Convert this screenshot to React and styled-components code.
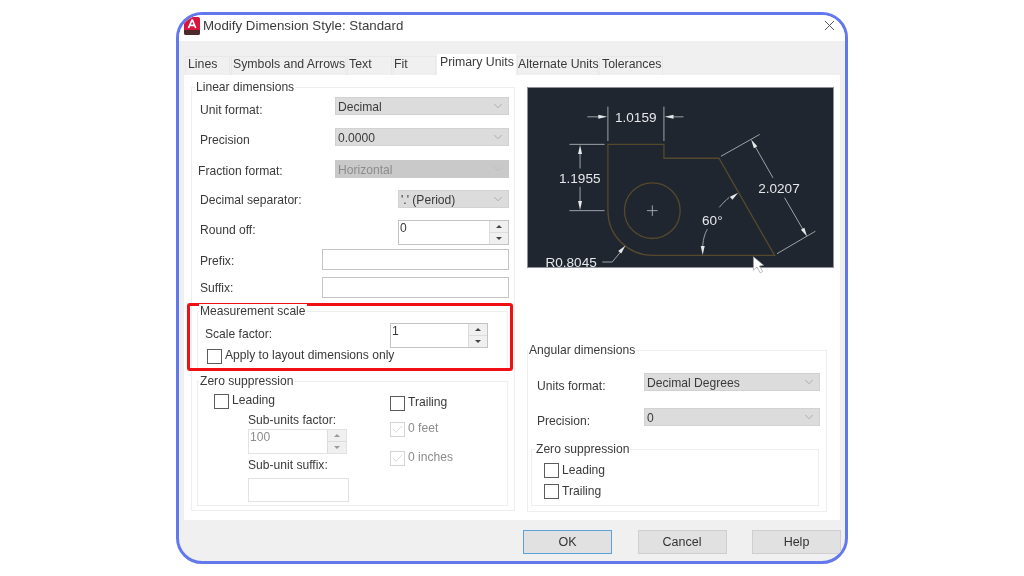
import React from 'react';
import styled, { createGlobalStyle } from 'styled-components';
import { Check, ChevronDown, X } from 'lucide-react';

const GlobalStyle = createGlobalStyle`
    html, body {
        margin: 0;
        padding: 0;
        background: #ffffff;
    }

    body {
        font-family: "Liberation Sans", Arial, sans-serif;
        font-size: 12.1px;
        line-height: 16px;
        color: #3a3a3a;
    }
`;

const Stage = styled.div`
    display: flex;
    justify-content: center;
    padding-top: 12px;
    height: 564px;
`;

const Dialog = styled.div`
    box-sizing: border-box;
    display: flex;
    flex-direction: column;
    width: 672px;
    height: 552px;
    border: 3px solid #6478ee;
    border-radius: 26px;
    background: #f0f0f0;
    overflow: hidden;
    filter: blur(0.35px);
`;

const TitleBar = styled.div`
    box-sizing: border-box;
    display: flex;
    align-items: center;
    height: 26px;
    padding: 0 7px 5px 5px;
    background: #ffffff;
`;

const TitleText = styled.span`
    margin-left: 3px;
    font-size: 13.3px;
    color: #3c3c3c;
`;

const CloseButton = styled.span`
    display: flex;
    margin-left: auto;
    color: #555555;
`;

const TabStrip = styled.div`
    display: flex;
    align-items: flex-end;
    height: 20px;
    margin: 14px 0 0 6px;
`;

const Tab = styled.div`
    box-sizing: border-box;
    flex: none;
    width: ${props => props.$width}px;
    height: ${props => (props.$active ? 21 : 19)}px;
    margin-right: 1px;
    padding-left: ${props => props.$pad}px;
    font-size: 12.3px;
    line-height: 14px;
    background: ${props => (props.$active ? '#ffffff' : '#f0f0f0')};
    border: 1px solid ${props => (props.$active ? '#ffffff' : '#e8e8e8')};
    border-bottom: none;
    white-space: nowrap;
`;

const TabPage = styled.div`
    box-sizing: border-box;
    display: flex;
    height: 445px;
    margin: 0 5px;
    padding: 5px 0 0 7px;
    background: #ffffff;
`;

const LeftColumn = styled.div`
    flex: none;
    width: 324px;
`;

const RightColumn = styled.div`
    flex: none;
    width: 307px;
    margin-left: 12px;
    padding-top: 7px;
`;

const Group = styled.fieldset`
    box-sizing: border-box;
    min-width: 0;
    width: ${props => (props.$width ? `${props.$width}px` : 'auto')};
    height: ${props => props.$height}px;
    margin: ${props => props.$margin || '0'};
    padding: ${props => props.$padding || '0'};
    border: 1px solid #eeeeee;
`;

const Legend = styled.legend`
    margin-left: ${props => props.$shift || 0}px;
    padding: 0 1px;
    line-height: 14px;
    color: #3a3a3a;
`;

const Row = styled.div`
    display: flex;
    justify-content: space-between;
    height: ${props => props.$height || 18}px;
    margin-top: ${props => props.$top || 0}px;
`;

const Label = styled.label`
    margin-top: ${props => props.$drop || 0}px;
    margin-left: ${props => props.$shift || 0}px;
    white-space: nowrap;
`;

const SelectBox = styled.div`
    box-sizing: border-box;
    display: flex;
    align-items: center;
    justify-content: space-between;
    width: ${props => props.$width}px;
    height: 18px;
    padding: 1px 3px 0 2px;
    background: ${props => (props.$disabled ? '#c9c9c9' : '#dcdcdc')};
    border: 1px solid ${props => (props.$disabled ? '#c9c9c9' : '#d2d2d2')};
    color: ${props => (props.$disabled ? '#8c8c8c' : '#3a3a3a')};
    white-space: nowrap;

    svg {
        margin-top: -1px;
        color: ${props => (props.$disabled ? '#b8b8b8' : '#9a9a9a')};
    }
`;

const TextInput = styled.div`
    box-sizing: border-box;
    width: ${props => props.$width}px;
    height: ${props => props.$height}px;
    margin-left: ${props => props.$left || 0}px;
    background: #ffffff;
    border: 1px solid ${props => (props.$disabled ? '#e2e2e2' : '#c4c4c4')};
`;

const SpinBox = styled.div`
    box-sizing: border-box;
    display: flex;
    width: ${props => props.$width}px;
    height: 25px;
    margin-left: ${props => props.$left || 0}px;
    background: #ffffff;
    border: 1px solid ${props => (props.$disabled ? '#e2e2e2' : '#c4c4c4')};
`;

const SpinValue = styled.span`
    flex: 1;
    padding-left: 1px;
    line-height: 15px;
    color: ${props => (props.$disabled ? '#8c8c8c' : '#3a3a3a')};
`;

const SpinButtons = styled.div`
    display: flex;
    flex-direction: column;
    flex: none;
    width: 18px;
    background: #f0f0f0;
    border-left: 1px solid #dcdcdc;
`;

const SpinStep = styled.span`
    display: flex;
    flex: 1;
    align-items: center;
    justify-content: center;

    & + & {
        border-top: 1px solid #dcdcdc;
    }

    &::after {
        content: '';
        border-left: 3px solid transparent;
        border-right: 3px solid transparent;
        border-${props => (props.$down ? 'top' : 'bottom')}: 3px solid ${props => (props.$disabled ? '#9a9a9a' : '#444444')};
    }
`;

const Highlight = styled.div`
    box-sizing: border-box;
    height: 68px;
    margin: 5px -4px 0 -13px;
    padding: 5px 0 0 7px;
    border: 3px solid #f00f14;
    border-radius: 3px;
`;

const ScaleGroup = styled.div`
    box-sizing: border-box;
    width: 311px;
    height: 57px;
    padding-left: 7px;
    border: 1px solid #eeeeee;
    border-bottom: none;
`;

const ScaleLegend = styled.span`
    display: block;
    width: fit-content;
    height: 14px;
    margin: -8px 0 1px -6px;
    padding: 0 1px;
    line-height: 14px;
    background: #ffffff;
`;

const ScaleRow = styled(Row)`
    margin-top: 5px;
    padding-right: 19px;
`;

const CheckRow = styled.div`
    display: flex;
    align-items: center;
    gap: 3px;
    height: 15px;
    margin-top: ${props => props.$top || 0}px;
    margin-left: ${props => props.$left || 0}px;
    color: ${props => (props.$disabled ? '#8c8c8c' : '#3a3a3a')};
    white-space: nowrap;
`;

const CheckText = styled.span`
    margin-bottom: ${props => props.$lift}px;
`;

const CheckBox = styled.span`
    box-sizing: border-box;
    display: flex;
    align-items: center;
    justify-content: center;
    flex: none;
    width: 15px;
    height: 15px;
    background: #ffffff;
    border: 1px solid ${props => (props.$disabled ? '#d4d4d4' : '#5c5c5c')};
    color: #c4c4c4;
`;

const ZeroColumns = styled.div`
    display: flex;
    padding-left: 16px;
`;

const ZeroLeft = styled.div`
    flex: none;
    width: 176px;
`;

const StackedLabel = styled.div`
    margin: ${props => props.$top || 0}px 0 ${props => props.$bottom || 0}px 34px;
`;

const Preview = styled.div`
    box-sizing: border-box;
    width: 307px;
    height: 181px;
    background: #1f262f;
    border: 1px solid #8f9296;

    svg {
        display: block;
        overflow: visible;
    }
`;

const AngularRow = styled(Row)`
    margin-right: -1px;
    padding-left: 6px;
`;

const Footer = styled.div`
    display: flex;
    justify-content: flex-end;
    gap: 25.5px;
    padding: 10px 4px 0 0;
`;

const DialogButton = styled.div`
    box-sizing: border-box;
    display: flex;
    align-items: center;
    justify-content: center;
    width: 89px;
    height: 24px;
    background: #e1e1e1;
    border: 1px solid ${props => (props.$primary ? '#5aa2d8' : '#cfcfcf')};
    font-size: 12.5px;
    color: #333333;
`;

const DrawingText = styled.text`
    font-family: "Liberation Sans", Arial, sans-serif;
    font-size: 41px;
    fill: #e6e8ea;
    text-anchor: middle;
`;

const AppIcon = () => (
    <svg width="16" height="18" viewBox="0 0 16 18">
        <rect width="16" height="18" rx="2" fill="#d8143f" />
        <path d="M0 13h16v3a2 2 0 0 1-2 2H2a2 2 0 0 1-2-2z" fill="#4a2a2a" />
        <path d="M4.5 11 8 3h.4l3.3 8M6 8.3h4.4" fill="none" stroke="#ffffff" strokeWidth="1.7" />
    </svg>
);

const Select = ({ width, disabled, children }) => (
    <SelectBox $width={width} $disabled={disabled}>
        <span>{children}</span>
        <ChevronDown size={14} strokeWidth={1.2} />
    </SelectBox>
);

const Spin = ({ width, left, disabled, children }) => (
    <SpinBox $width={width} $left={left} $disabled={disabled}>
        <SpinValue $disabled={disabled}>{children}</SpinValue>
        <SpinButtons>
            <SpinStep $disabled={disabled} />
            <SpinStep $down $disabled={disabled} />
        </SpinButtons>
    </SpinBox>
);

const Option = ({ top, left, lift = 4, disabled, checked, children }) => (
    <CheckRow $top={top} $left={left} $disabled={disabled}>
        <CheckBox $disabled={disabled}>
            {checked && <Check size={13} strokeWidth={1.2} />}
        </CheckBox>
        <CheckText $lift={lift}>{children}</CheckText>
    </CheckRow>
);

const Arrow = ({ x, y, angle }) => (
    <path d="M0 0 L-27 -6 L-27 6 Z" fill="#e6e8ea" transform={`translate(${x} ${y}) rotate(${angle})`} />
);

// coordinates are the reference crop at 3x, so the viewBox starts at 22,262
const DimensionDrawing = () => (
    <svg width="305" height="179" viewBox="22 262 918 540">
        <g fill="none" stroke="#55482c" strokeWidth="4">
            <path d="M262 432H431V474H597L765 767H397A135 135 0 0 1 262 632Z" />
            <circle cx="396" cy="632" r="84" />
        </g>
        <g fill="none" stroke="#9ea3a8" strokeWidth="3">
            <path d="M380 632H412M396 616V648" />
            <path d="M262 318V422M431 318V422M200 349H235M490 349H460" />
            <path d="M146 432H252M146 632H252M178 460V505M178 560V605" />
            <path d="M603 468L720 402M772 762L888 694M707 440L760 533M795 593L850 688" />
            <path d="M548 738C550 715 555 700 562 688M598 622C608 610 616 602 628 592" />
            <path d="M245 787H275L300 757" />
        </g>
        <Arrow x={260} y={349} angle={0} />
        <Arrow x={433} y={349} angle={180} />
        <Arrow x={178} y={434} angle={-90} />
        <Arrow x={178} y={630} angle={90} />
        <Arrow x={694} y={417} angle={-120} />
        <Arrow x={863} y={710} angle={60} />
        <Arrow x={548} y={766} angle={90} />
        <Arrow x={655} y={578} angle={-38} />
        <Arrow x={315} y={737} angle={-50} />
        <DrawingText x="346" y="364">1.0159</DrawingText>
        <DrawingText x="177" y="548">1.1955</DrawingText>
        <DrawingText x="778" y="579">2.0207</DrawingText>
        <DrawingText x="577" y="674">60°</DrawingText>
        <DrawingText x="151" y="801">R0.8045</DrawingText>
        <path d="M701 771V812L711 802L722 820L729 815L719 799L732 797Z" fill="#ffffff" stroke="#9a9a9a" strokeWidth="2" />
    </svg>
);

const tabs = [
    { name: 'Lines', width: 45, pad: 2 },
    { name: 'Symbols and Arrows', width: 115, pad: 1 },
    { name: 'Text', width: 45, pad: 1 },
    { name: 'Fit', width: 43, pad: 0 },
    { name: 'Primary Units', width: 79, pad: 2, active: true },
    { name: 'Alternate Units', width: 81, pad: 0 },
    { name: 'Tolerances', width: 64, pad: 2 },
];

const App = () => (
    <Stage>
        <GlobalStyle />
        <Dialog>
            <TitleBar>
                <AppIcon />
                <TitleText>Modify Dimension Style: Standard</TitleText>
                <CloseButton>
                    <X size={17} strokeWidth={1.4} />
                </CloseButton>
            </TitleBar>

            <TabStrip>
                {tabs.map(tab => (
                    <Tab key={tab.name} $width={tab.width} $pad={tab.pad} $active={tab.active}>
                        {tab.name}
                    </Tab>
                ))}
            </TabStrip>

            <TabPage>
                <LeftColumn>
                    <Group $height={431} $padding="0 5px 0 8px">
                        <Legend $shift={-5}>Linear dimensions</Legend>
                        <Row $top={3}>
                            <Label $drop={5}>Unit format:</Label>
                            <Select width={174}>Decimal</Select>
                        </Row>
                        <Row $top={13}>
                            <Label $drop={4}>Precision</Label>
                            <Select width={174}>0.0000</Select>
                        </Row>
                        <Row $top={14}>
                            <Label $drop={3} $shift={-2}>Fraction format:</Label>
                            <Select width={174} disabled>Horizontal</Select>
                        </Row>
                        <Row $top={12}>
                            <Label $drop={2}>Decimal separator:</Label>
                            <Select width={111}>'.' (Period)</Select>
                        </Row>
                        <Row $top={12} $height={25}>
                            <Label $drop={2}>Round off:</Label>
                            <Spin width={111}>0</Spin>
                        </Row>
                        <Row $top={4} $height={21}>
                            <Label $drop={4}>Prefix:</Label>
                            <TextInput $width={187} $height={21} />
                        </Row>
                        <Row $top={7} $height={21}>
                            <Label $drop={3}>Suffix:</Label>
                            <TextInput $width={187} $height={21} />
                        </Row>

                        <Highlight>
                            <ScaleGroup>
                                <ScaleLegend>Measurement scale</ScaleLegend>
                                <ScaleRow $height={25}>
                                    <Label $drop={3}>Scale factor:</Label>
                                    <Spin width={98}>1</Spin>
                                </ScaleRow>
                                <Option top={1} left={2}>Apply to layout dimensions only</Option>
                            </ScaleGroup>
                        </Highlight>

                        <Group $width={311} $height={132} $margin="3px 0 0 -3px">
                            <Legend $shift={1}>Zero suppression</Legend>
                            <ZeroColumns>
                                <ZeroLeft>
                                    <Option top={6}>Leading</Option>
                                    <StackedLabel $top={3} $bottom={1}>Sub-units factor:</StackedLabel>
                                    <Spin width={99} left={34} disabled>100</Spin>
                                    <StackedLabel $top={3} $bottom={5}>Sub-unit suffix:</StackedLabel>
                                    <TextInput $width={101} $height={24} $left={34} $disabled />
                                </ZeroLeft>
                                <div>
                                    <Option top={8}>Trailing</Option>
                                    <Option top={11} disabled checked>0 feet</Option>
                                    <Option top={14} disabled checked>0 inches</Option>
                                </div>
                            </ZeroColumns>
                        </Group>
                    </Group>
                </LeftColumn>

                <RightColumn>
                    <Preview>
                        <DimensionDrawing />
                    </Preview>

                    <Group $width={300} $height={169} $margin="75px 0 0" $padding="0 7px 0 3px">
                        <Legend $shift={-3}>Angular dimensions</Legend>
                        <AngularRow $top={16}>
                            <Label $drop={5}>Units format:</Label>
                            <Select width={176}>Decimal Degrees</Select>
                        </AngularRow>
                        <AngularRow $top={17}>
                            <Label $drop={5}>Precision:</Label>
                            <Select width={176}>0</Select>
                        </AngularRow>
                        <Group $height={64} $margin="16px 0 0" $padding="0 0 0 12px">
                            <Legend $shift={-9}>Zero suppression</Legend>
                            <Option top={7} lift={2}>Leading</Option>
                            <Option top={6} lift={2}>Trailing</Option>
                        </Group>
                    </Group>
                </RightColumn>
            </TabPage>

            <Footer>
                <DialogButton $primary>OK</DialogButton>
                <DialogButton>Cancel</DialogButton>
                <DialogButton>Help</DialogButton>
            </Footer>
        </Dialog>
    </Stage>
);

export default App;
